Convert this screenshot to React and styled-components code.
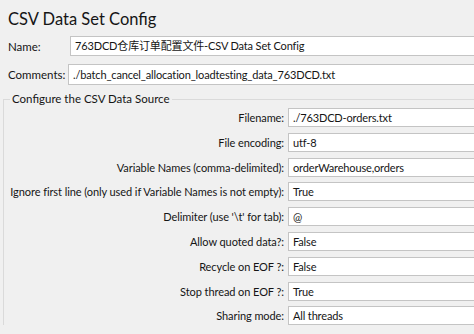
import React from "react";
import styled, { createGlobalStyle } from "styled-components";

const Global = createGlobalStyle`
  html, body { margin: 0; padding: 0; background: #f0f0f0; overflow: hidden; }
  body { font-family: Lato, "Noto Sans CJK SC", sans-serif; color: #151515; }
`;

const Page = styled.div`
  width: 520px;
  height: 334px;
  padding: 9px 0 0 0;
  box-sizing: border-box;
  background: #f0f0f0;
`;

const Title = styled.div`
  font-size: 16.5px;
  line-height: 20px;
  padding-left: 8px;
  margin-bottom: 7px;
`;

const TopRow = styled.div`
  display: flex;
  align-items: center;
  height: 20px;
  margin-bottom: 8px;
`;

const TopLabel = styled.div`
  width: ${(p) => p.$w}px;
  padding-left: 8px;
  box-sizing: border-box;
  font-size: 11.5px;
  flex: none;
  white-space: nowrap;
`;

const Field = styled.div`
  flex: 1;
  height: ${(p) => p.$h || 19}px;
  background: #fff;
  border: 1px solid #c4c4c4;
  border-right: none;
  box-sizing: border-box;
  font-size: 11px;
  letter-spacing: -0.15px;
  line-height: ${(p) => (p.$h || 19) - 2}px;
  padding-left: 4px;
  white-space: nowrap;
  overflow: hidden;
`;

const Group = styled.fieldset`
  margin: 2px 0 0 3px;
  padding: 2px 0 0 0;
  border: 1px solid #dadada;
  border-right: none;
  border-bottom: none;
`;

const Legend = styled.legend`
  font-size: 11.5px;
  line-height: 14px;
  padding: 0 2px;
  margin-left: 6px;
`;

const Rows = styled.div`
  display: grid;
  grid-template-columns: 284px 1fr;
  row-gap: 5.8px;
  align-items: center;
`;

const RowLabel = styled.div`
  text-align: right;
  font-size: 11px;
  letter-spacing: -0.08px;
  padding-right: 4px;
  white-space: nowrap;
`;

const rows = [
  ["Filename:", "./763DCD-orders.txt"],
  ["File encoding:", "utf-8"],
  ["Variable Names (comma-delimited):", "orderWarehouse,orders"],
  ["Ignore first line (only used if Variable Names is not empty):", "True"],
  ["Delimiter (use '\\t' for tab):", "@"],
  ["Allow quoted data?:", "False"],
  ["Recycle on EOF ?:", "False"],
  ["Stop thread on EOF ?:", "True"],
  ["Sharing mode:", "All threads"],
];

export default function App() {
  return (
    <Page>
      <Global />
      <Title>CSV Data Set Config</Title>
      <TopRow>
        <TopLabel $w={70}>Name:</TopLabel>
        <Field $h={20}>763DCD仓库订单配置文件-CSV Data Set Config</Field>
      </TopRow>
      <TopRow>
        <TopLabel $w={68}>Comments:</TopLabel>
        <Field $h={21}>./batch_cancel_allocation_loadtesting_data_763DCD.txt</Field>
      </TopRow>
      <Group>
        <Legend>Configure the CSV Data Source</Legend>
        <Rows>
          {rows.map(([l, v]) => (
            <React.Fragment key={l}>
              <RowLabel>{l}</RowLabel>
              <Field>{v}</Field>
            </React.Fragment>
          ))}
        </Rows>
      </Group>
    </Page>
  );
}
